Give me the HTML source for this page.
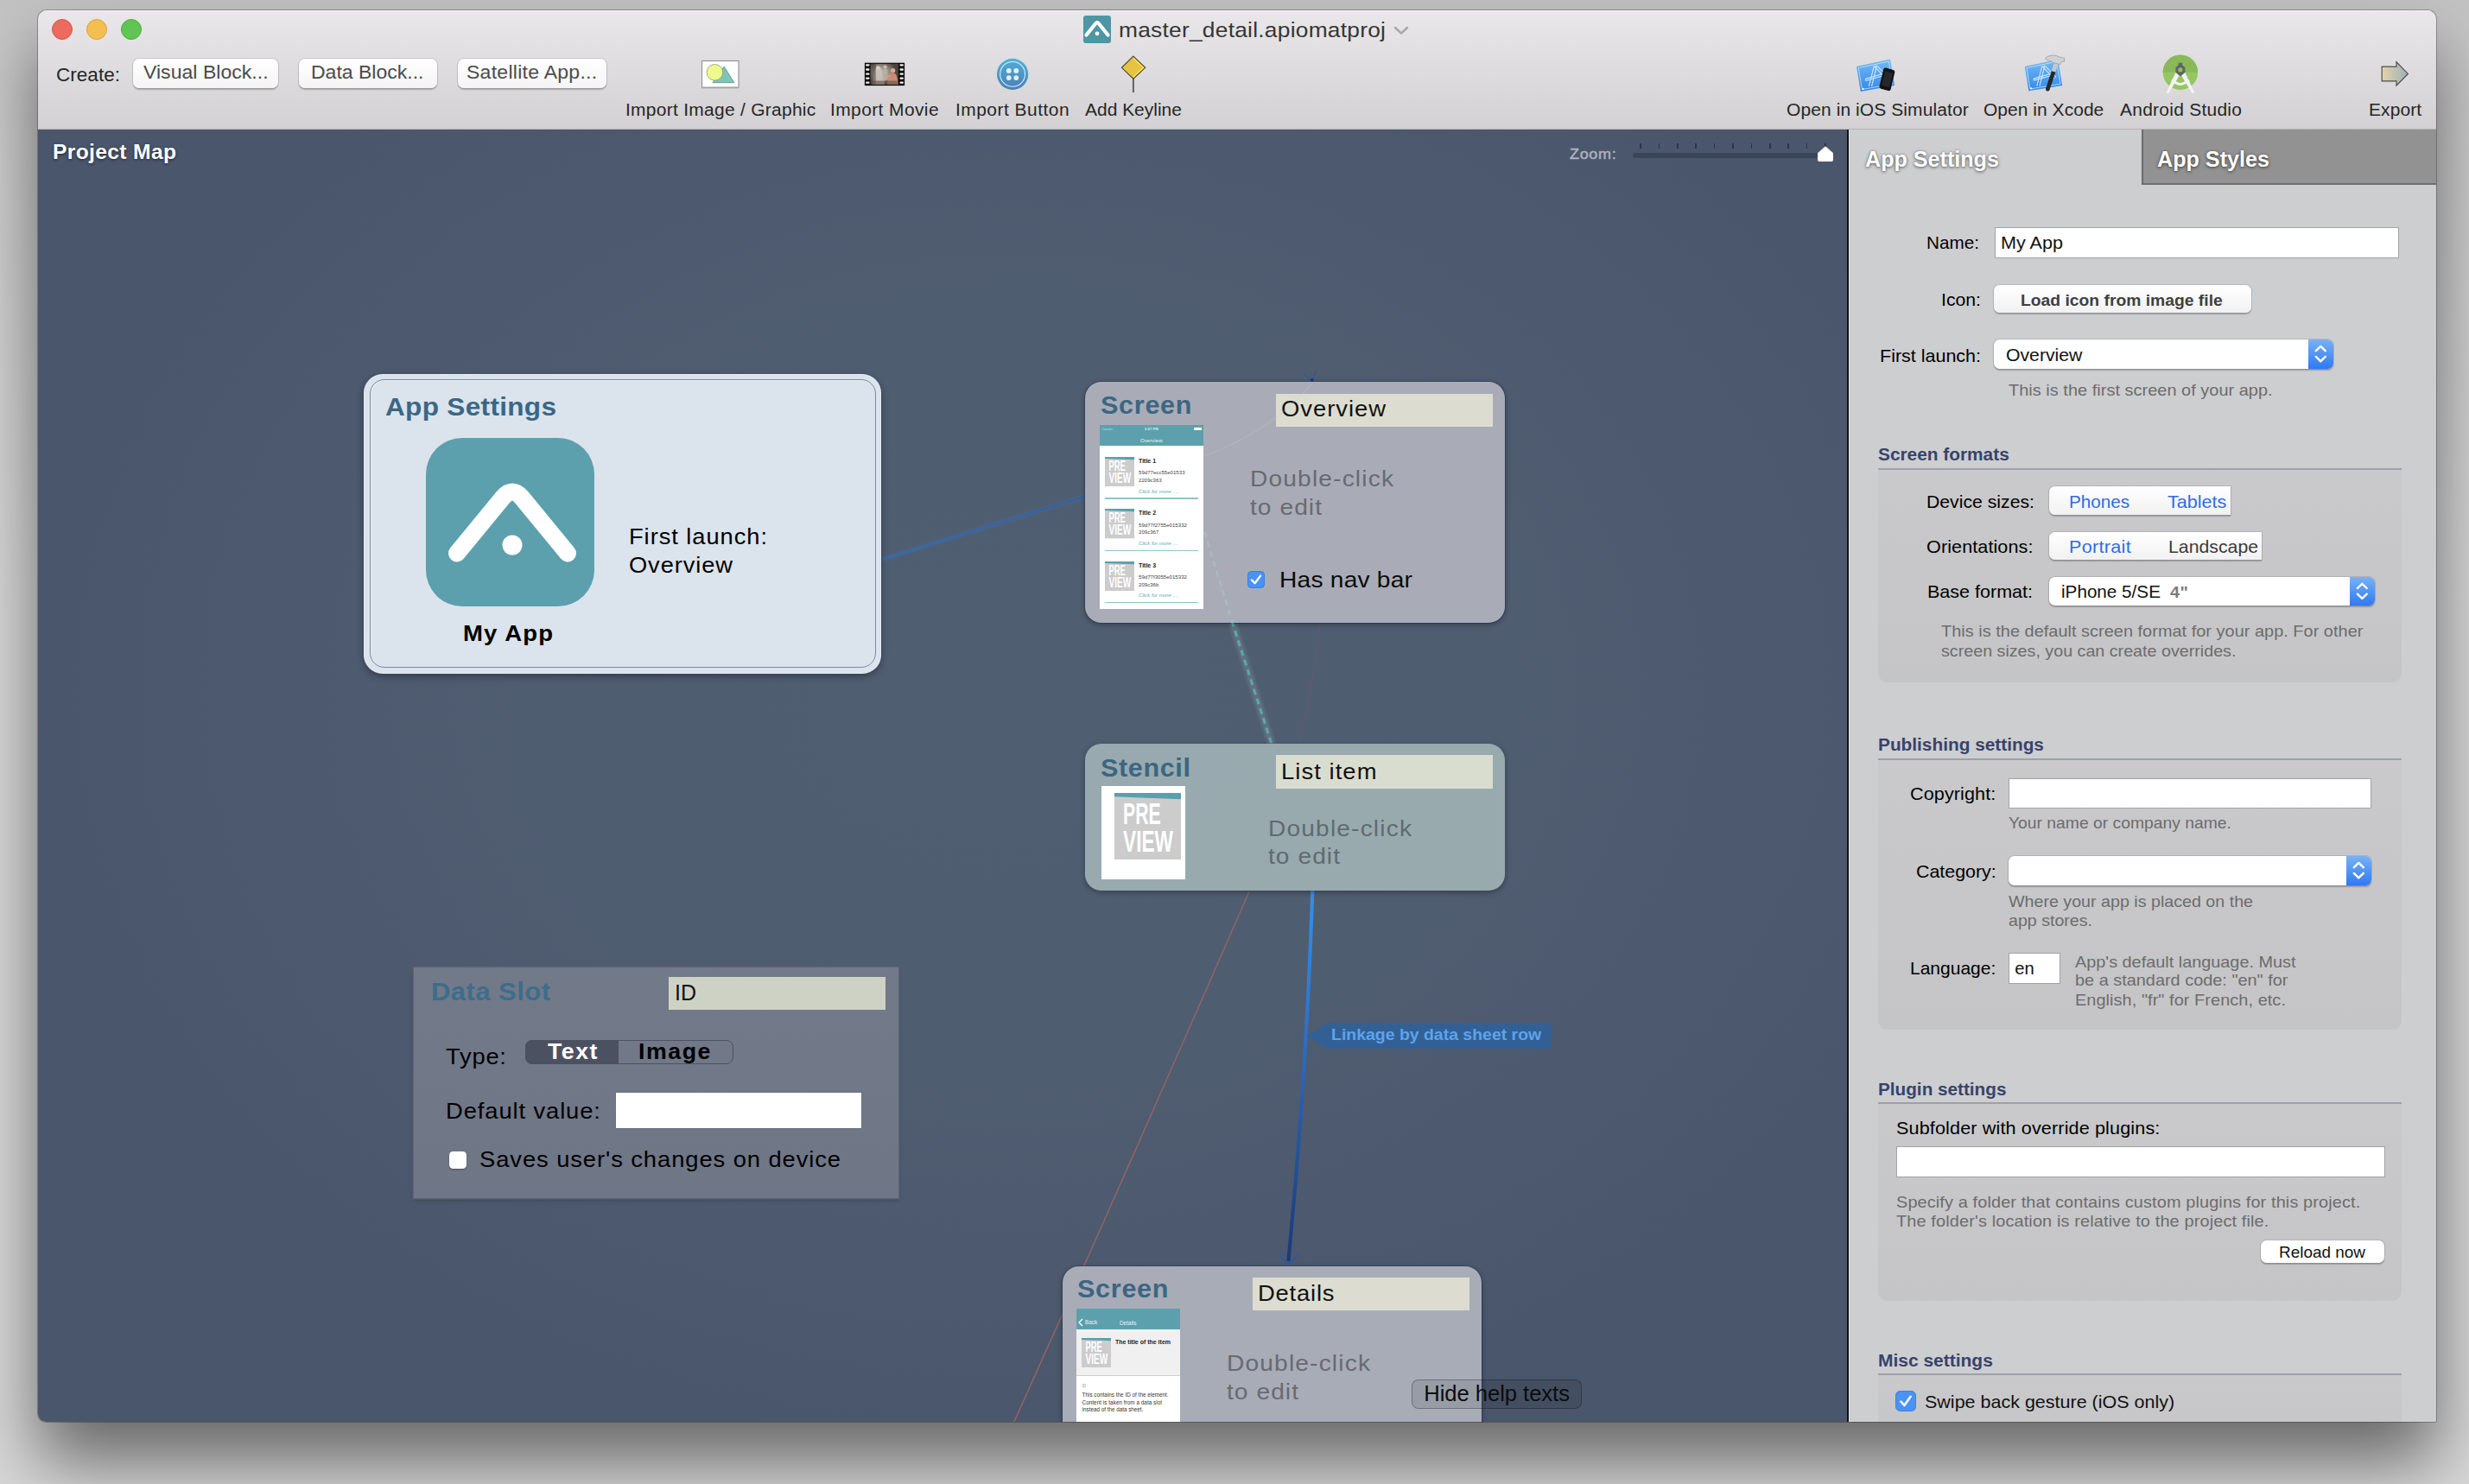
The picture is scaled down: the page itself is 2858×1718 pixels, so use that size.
<!DOCTYPE html>
<html><head><meta charset="utf-8"><title>master_detail.apiomatproj</title>
<style>
html,body{margin:0;padding:0;}
body{width:2858px;height:1718px;overflow:hidden;background:linear-gradient(#c3c3c3 0px,#cccccc 150px,#d8d8d8 700px,#d8d8d8 100%);font-family:"Liberation Sans",sans-serif;position:relative;}
.b{position:absolute;display:block;}
.t{position:absolute;display:block;white-space:pre;transform-origin:0 50%;font-family:"Liberation Sans",sans-serif;}
#shadow{position:absolute;left:44px;top:12px;width:2776px;height:1634px;border-radius:10px 10px 2px 9px;box-shadow:0 0 0 1px rgba(0,0,0,0.26),0 46px 80px rgba(0,0,0,0.52);}
#win{position:absolute;left:0;top:0;width:2858px;height:1718px;clip-path:inset(12px 38px 72px 44px round 10px 10px 2px 9px);}
</style></head><body>
<div id="shadow"></div>
<div id="win">
<div class="b" style="left:44.00px;top:150.00px;width:2094.00px;height:1496.00px;background:#4a566b;"></div>
<div class="b" style="left:44.00px;top:150.00px;width:2094.00px;height:1496.00px;background:radial-gradient(ellipse 1150px 900px at 1131px 650px, rgba(98,118,135,0.26) 0%, rgba(98,118,135,0.21) 50%, rgba(98,118,135,0.0) 100%);"></div>
<span class="t" style="left:60.50px;top:165.00px;font-size:23px;line-height:23px;color:#fff;letter-spacing:0.328px;transform:scaleX(1.0700);font-weight:bold;text-shadow:0 1px 3px rgba(0,0,0,0.6);">Project Map</span>
<span class="t" style="left:1817.00px;top:171.00px;font-size:16.8px;line-height:16.8px;color:#aeb4c0;letter-spacing:0.644px;transform:scaleX(1.0700);-webkit-text-stroke:0.45px #aeb4c0;">Zoom:</span>
<div class="b" style="left:1890.00px;top:177.30px;width:230.00px;height:5.70px;background:#3a4558;border-radius:3px;"></div>
<div class="b" style="left:1898.20px;top:166.00px;width:1.60px;height:5.60px;background:#2b3546;"></div>
<div class="b" style="left:1919.60px;top:166.00px;width:1.60px;height:5.60px;background:#2b3546;"></div>
<div class="b" style="left:1941.00px;top:166.00px;width:1.60px;height:5.60px;background:#2b3546;"></div>
<div class="b" style="left:1962.40px;top:166.00px;width:1.60px;height:5.60px;background:#2b3546;"></div>
<div class="b" style="left:1983.80px;top:166.00px;width:1.60px;height:5.60px;background:#2b3546;"></div>
<div class="b" style="left:2005.20px;top:166.00px;width:1.60px;height:5.60px;background:#2b3546;"></div>
<div class="b" style="left:2026.60px;top:166.00px;width:1.60px;height:5.60px;background:#2b3546;"></div>
<div class="b" style="left:2048.00px;top:166.00px;width:1.60px;height:5.60px;background:#2b3546;"></div>
<div class="b" style="left:2069.40px;top:166.00px;width:1.60px;height:5.60px;background:#2b3546;"></div>
<div class="b" style="left:2090.80px;top:166.00px;width:1.60px;height:5.60px;background:#2b3546;"></div>
<div class="b" style="left:2112.20px;top:166.00px;width:1.60px;height:5.60px;background:#2b3546;"></div>
<svg class="b" style="left:2102px;top:168px" width="22" height="20" viewBox="0 0 22 20"><path d="M11 1.2 L20 9.2 L20 17 Q20 19 18 19 L4 19 Q2 19 2 17 L2 9.2 Z" fill="#fff"/></svg>
<svg class="b" style="left:44px;top:150px" width="2095" height="1496" viewBox="44 150 2095 1496">
<defs>
<linearGradient id="l1" gradientUnits="userSpaceOnUse" x1="1021" y1="648" x2="1257" y2="574"><stop offset="0" stop-color="#2f6fc0"/><stop offset="1" stop-color="#2c5da0"/></linearGradient>
<linearGradient id="l2" gradientUnits="userSpaceOnUse" x1="1519" y1="1031" x2="1491" y2="1463"><stop offset="0" stop-color="#3390ea"/><stop offset="0.3" stop-color="#2e78d0"/><stop offset="0.55" stop-color="#2a5fae"/><stop offset="1" stop-color="#1b3976"/></linearGradient>
</defs>
<path d="M1021 647.6 L1256.7 574.5" stroke="url(#l1)" stroke-width="3" opacity="0.6"/>
<path d="M1021 647.6 L1256.7 574.5" stroke="#3a7fd0" stroke-width="7" opacity="0.12"/>
<path d="M1527.5 721.8 Q1522 790 1503.6 861.3" stroke="#7a5565" stroke-width="1.2" fill="none" opacity="0.5"/>
<path d="M1446 1032 Q1316 1330 1173 1648" stroke="#a3685f" stroke-width="1.5" fill="none" opacity="0.8"/>
<path d="M1426 719 L1476 874" stroke="#cfe9ea" stroke-width="11" fill="none" opacity="0.07"/><path d="M1426 719 L1476 874" stroke="#cfe9ea" stroke-width="6" fill="none" opacity="0.08"/><path d="M1426 719 L1476 874" stroke="#52b4ad" stroke-width="2.9" stroke-dasharray="6.8 5" fill="none" opacity="0.9"/>
<path d="M1519.3 1031 Q1512 1250 1491.4 1460" stroke="url(#l2)" stroke-width="4.2" fill="none"/>
<path d="M1481 1453 L1491.4 1463.5 L1502 1453" stroke="#245aa8" stroke-width="1.6" fill="none"/>
<path d="M1509 433 L1518.5 440.5 L1524 429" stroke="#2a5a9c" stroke-width="1.3" fill="none" opacity="0.8"/>
<rect x="1517" y="438" width="3.5" height="4" fill="#1c3a78"/>
</svg>
<div class="b" style="left:420.80px;top:432.50px;width:599.70px;height:347.50px;border-radius:22px;background:#dbe3ec;box-shadow:0 3px 8px rgba(0,0,0,0.35), inset 0 0 0 1px rgba(255,255,255,0.25);"></div>
<div class="b" style="left:428.00px;top:439.00px;width:585.60px;height:334.00px;border-radius:17px;border:1.9px solid #7a87a7;box-sizing:border-box;box-shadow:inset 1px 1px 0 rgba(255,255,255,0.35);"></div>
<span class="t" style="left:445.50px;top:456.00px;font-size:29.5px;line-height:29.5px;color:#3b6784;letter-spacing:0.285px;transform:scaleX(1.0700);font-weight:bold;">App Settings</span>
<svg class="b" style="left:493px;top:507px" width="195" height="195" viewBox="0 0 195 195"><rect width="195" height="195" rx="42" fill="#5da0ad"/><path d="M36 133.5 L89 69 Q100 56 111 69 L164 133.5" fill="none" stroke="#fff" stroke-width="20" stroke-linecap="round" stroke-linejoin="round"/><circle cx="100" cy="124" r="11.5" fill="#fff"/></svg>
<span class="t" style="left:727.60px;top:609.00px;font-size:25.5px;line-height:25.5px;color:#000;letter-spacing:0.888px;transform:scaleX(1.0700);">First launch:</span>
<span class="t" style="left:727.60px;top:642.00px;font-size:25.5px;line-height:25.5px;color:#000;letter-spacing:0.840px;transform:scaleX(1.0700);">Overview</span>
<span class="t" style="left:536.00px;top:721.00px;font-size:25.7px;line-height:25.7px;color:#000;letter-spacing:1.070px;transform:scaleX(1.0700);font-weight:bold;">My App</span>
<div class="b" style="left:1256.00px;top:442.00px;width:485.80px;height:278.70px;border-radius:19px;box-shadow:0 2px 6px rgba(0,0,0,0.35),0 0 0 1px rgba(50,62,100,0.55);background:rgba(172,175,186,0.965);"></div>
<span class="t" style="left:1273.70px;top:455.00px;font-size:28.6px;line-height:28.6px;color:#3c6682;letter-spacing:0.641px;transform:scaleX(1.0700);font-weight:bold;">Screen</span>
<div class="b" style="left:1476.70px;top:456.00px;width:251.30px;height:38.40px;background:#dcddd0;"></div>
<span class="t" style="left:1483.00px;top:461.00px;font-size:25.6px;line-height:25.6px;color:#111;letter-spacing:0.914px;transform:scaleX(1.0700);">Overview</span>
<span class="t" style="left:1447.00px;top:542.00px;font-size:25.6px;line-height:25.6px;color:#686a72;letter-spacing:1.044px;transform:scaleX(1.1000);">Double-click</span>
<span class="t" style="left:1447.00px;top:575.00px;font-size:25.6px;line-height:25.6px;color:#686a72;letter-spacing:0.953px;transform:scaleX(1.1000);">to edit</span>
<svg class="b" style="left:1444px;top:661px" width="20" height="20" viewBox="0 0 20 20"><rect x="0.5" y="0.5" width="19" height="19" rx="4" fill="#4a92f3" stroke="#3b7fe0"/><path d="M5 10.5 L8.6 14.2 L15 5.6" fill="none" stroke="#fff" stroke-width="2.4" stroke-linecap="round" stroke-linejoin="round"/></svg>
<span class="t" style="left:1481.00px;top:658.00px;font-size:26.3px;line-height:26.3px;color:#0a0a0a;letter-spacing:0.213px;transform:scaleX(1.0700);">Has nav bar</span>
<div class="b" style="left:1272.60px;top:491.70px;width:120.40px;height:213.10px;background:#fff;"></div>
<div class="b" style="left:1272.60px;top:491.70px;width:120.40px;height:23.90px;background:#5da0ad;"></div>
<span class="t" style="left:1319.88px;top:507.00px;font-size:6.2px;line-height:6.2px;color:#e9f4f6;">Overview</span>
<span class="t" style="left:1275.00px;top:495.00px;font-size:4.2px;line-height:4.2px;color:#bfe0e5;">Carrier</span>
<span class="t" style="left:1324.86px;top:495.00px;font-size:4.2px;line-height:4.2px;color:#d8eef2;font-weight:bold;">3:57 PM</span>
<div class="b" style="left:1381.50px;top:494.50px;width:9.00px;height:3.00px;background:#fff;border-radius:1px;"></div>
<svg class="b" style="left:1278.70px;top:529.00px" width="34.30" height="34.30" viewBox="0 0 100 100"><rect width="100" height="100" fill="#cccccc"/><path d="M0 0 L100 0 L100 9.5 L0 5.5 Z" fill="#5a9fab"/><g fill="#fff" font-family="Liberation Sans, sans-serif" font-weight="bold"><text x="13" y="47" font-size="46.6" textLength="56.7" lengthAdjust="spacingAndGlyphs">PRE</text><text x="13" y="87.8" font-size="46.6" textLength="75" lengthAdjust="spacingAndGlyphs">VIEW</text></g></svg>
<span class="t" style="left:1318.00px;top:530.00px;font-size:7px;line-height:7px;color:#222;font-weight:bold;">Title 1</span>
<span class="t" style="left:1318.00px;top:544.00px;font-size:6.1px;line-height:6.1px;color:#444;">59d77ecc55e01533</span>
<span class="t" style="left:1318.00px;top:553.00px;font-size:6.1px;line-height:6.1px;color:#444;">2209c363</span>
<span class="t" style="left:1318.00px;top:566.00px;font-size:6.1px;line-height:6.1px;color:#62aab5;font-style:italic;">Click for more ....</span>
<div class="b" style="left:1278.70px;top:576.30px;width:108.30px;height:1.30px;background:#8fc4cc;"></div>
<svg class="b" style="left:1278.70px;top:589.30px" width="34.30" height="34.30" viewBox="0 0 100 100"><rect width="100" height="100" fill="#cccccc"/><path d="M0 0 L100 0 L100 9.5 L0 5.5 Z" fill="#5a9fab"/><g fill="#fff" font-family="Liberation Sans, sans-serif" font-weight="bold"><text x="13" y="47" font-size="46.6" textLength="56.7" lengthAdjust="spacingAndGlyphs">PRE</text><text x="13" y="87.8" font-size="46.6" textLength="75" lengthAdjust="spacingAndGlyphs">VIEW</text></g></svg>
<span class="t" style="left:1318.00px;top:590.00px;font-size:7px;line-height:7px;color:#222;font-weight:bold;">Title 2</span>
<span class="t" style="left:1318.00px;top:605.00px;font-size:6.1px;line-height:6.1px;color:#444;">59d77f2755e015332</span>
<span class="t" style="left:1318.00px;top:613.00px;font-size:6.1px;line-height:6.1px;color:#444;">209c367</span>
<span class="t" style="left:1318.00px;top:626.00px;font-size:6.1px;line-height:6.1px;color:#62aab5;font-style:italic;">Click for more ....</span>
<div class="b" style="left:1278.70px;top:636.60px;width:108.30px;height:1.30px;background:#8fc4cc;"></div>
<svg class="b" style="left:1278.70px;top:649.60px" width="34.30" height="34.30" viewBox="0 0 100 100"><rect width="100" height="100" fill="#cccccc"/><path d="M0 0 L100 0 L100 9.5 L0 5.5 Z" fill="#5a9fab"/><g fill="#fff" font-family="Liberation Sans, sans-serif" font-weight="bold"><text x="13" y="47" font-size="46.6" textLength="56.7" lengthAdjust="spacingAndGlyphs">PRE</text><text x="13" y="87.8" font-size="46.6" textLength="75" lengthAdjust="spacingAndGlyphs">VIEW</text></g></svg>
<span class="t" style="left:1318.00px;top:651.00px;font-size:7px;line-height:7px;color:#222;font-weight:bold;">Title 3</span>
<span class="t" style="left:1318.00px;top:665.00px;font-size:6.1px;line-height:6.1px;color:#444;">59d77f3055e015332</span>
<span class="t" style="left:1318.00px;top:674.00px;font-size:6.1px;line-height:6.1px;color:#444;">209c36b</span>
<span class="t" style="left:1318.00px;top:686.00px;font-size:6.1px;line-height:6.1px;color:#62aab5;font-style:italic;">Click for more ....</span>
<div class="b" style="left:1278.70px;top:696.90px;width:108.30px;height:1.30px;background:#8fc4cc;"></div>
<svg class="b" style="left:1380px;top:600px" width="70" height="130" viewBox="1380 600 70 130"><path d="M1394.2 615.6 L1427 722" stroke="#9fd6d2" stroke-width="2.9" stroke-dasharray="6.8 5" fill="none" opacity="0.35"/></svg>
<svg class="b" style="left:1390px;top:440px" width="135" height="95" viewBox="1390 440 135 95"><path d="M1394 528 Q1470 500 1519 444" stroke="#c8ccdc" stroke-width="1.6" fill="none" opacity="0.22"/></svg>
<div class="b" style="left:1256.00px;top:860.80px;width:485.80px;height:170.60px;border-radius:19px;box-shadow:0 2px 6px rgba(0,0,0,0.35),0 0 0 1px rgba(90,110,130,0.35);background:rgba(155,172,177,0.97);"></div>
<span class="t" style="left:1273.70px;top:875.00px;font-size:28.6px;line-height:28.6px;color:#3c6682;letter-spacing:0.570px;transform:scaleX(1.0700);font-weight:bold;">Stencil</span>
<div class="b" style="left:1476.70px;top:873.90px;width:251.30px;height:38.90px;background:#d9ddd0;"></div>
<span class="t" style="left:1483.00px;top:881.00px;font-size:25.6px;line-height:25.6px;color:#111;letter-spacing:0.995px;transform:scaleX(1.0700);">List item</span>
<div class="b" style="left:1275.30px;top:910.00px;width:96.40px;height:108.30px;background:#fff;"></div>
<svg class="b" style="left:1289.50px;top:917.60px" width="77.20" height="77.20" viewBox="0 0 100 100"><rect width="100" height="100" fill="#cccccc"/><path d="M0 0 L100 0 L100 9.5 L0 5.5 Z" fill="#5a9fab"/><g fill="#fff" font-family="Liberation Sans, sans-serif" font-weight="bold"><text x="13" y="47" font-size="46.6" textLength="56.7" lengthAdjust="spacingAndGlyphs">PRE</text><text x="13" y="87.8" font-size="46.6" textLength="75" lengthAdjust="spacingAndGlyphs">VIEW</text></g></svg>
<span class="t" style="left:1468.40px;top:947.00px;font-size:25.6px;line-height:25.6px;color:#5f6b70;letter-spacing:1.044px;transform:scaleX(1.1000);">Double-click</span>
<span class="t" style="left:1468.40px;top:979.00px;font-size:25.6px;line-height:25.6px;color:#5f6b70;letter-spacing:0.953px;transform:scaleX(1.1000);">to edit</span>
<div class="b" style="left:479.40px;top:1120.00px;width:560.90px;height:266.80px;background:linear-gradient(#727988,#6f7686);box-shadow:0 0 0 1.5px #5b627a, 0 2px 5px rgba(0,0,0,0.25);"></div>
<span class="t" style="left:498.90px;top:1134.00px;font-size:29px;line-height:29px;color:#3c6d8c;letter-spacing:0.411px;transform:scaleX(1.0700);font-weight:bold;">Data Slot</span>
<div class="b" style="left:774.00px;top:1130.90px;width:251.20px;height:38.40px;background:#ced2c5;"></div>
<span class="t" style="left:781.30px;top:1137.00px;font-size:25.6px;line-height:25.6px;color:#111;transform:scaleX(0.9766);">ID</span>
<span class="t" style="left:516.40px;top:1211.00px;font-size:25.6px;line-height:25.6px;color:#000;letter-spacing:0.702px;transform:scaleX(1.0700);">Type:</span>
<div class="b" style="left:607.80px;top:1204.00px;width:241.00px;height:27.70px;border-radius:8px;border:1.5px solid #4c5163;box-sizing:border-box;"></div>
<div class="b" style="left:607.80px;top:1204.00px;width:108.70px;height:27.70px;border-radius:8px 0 0 8px;background:#4c5161;"></div>
<span class="t" style="left:633.55px;top:1205.00px;font-size:25px;line-height:25px;color:#fff;letter-spacing:1.396px;transform:scaleX(1.0700);font-weight:bold;">Text</span>
<span class="t" style="left:739.00px;top:1205.00px;font-size:25px;line-height:25px;color:#000;letter-spacing:1.446px;transform:scaleX(1.0700);font-weight:bold;">Image</span>
<span class="t" style="left:516.40px;top:1274.00px;font-size:25.6px;line-height:25.6px;color:#000;letter-spacing:0.827px;transform:scaleX(1.0700);">Default value:</span>
<div class="b" style="left:712.70px;top:1264.80px;width:284.80px;height:41.20px;background:#fff;box-shadow:0 0 0 1px #6b7286;"></div>
<div class="b" style="left:520.30px;top:1333.30px;width:19.40px;height:19.40px;background:#fff;border-radius:4.5px;box-shadow:0 1px 2px rgba(0,0,0,0.35);"></div>
<span class="t" style="left:555.30px;top:1330.00px;font-size:25.6px;line-height:25.6px;color:#000;letter-spacing:0.844px;transform:scaleX(1.0700);">Saves user's changes on device</span>
<svg class="b" style="left:1510px;top:1182px" width="290" height="34" viewBox="1510 1182 290 34"><path d="M1512.2 1199.2 L1536.4 1184.3 L1792.5 1184.3 Q1796.2 1184.3 1796.2 1188 L1796.2 1210.3 Q1796.2 1214 1792.5 1214 L1536.4 1214 Z" fill="#336094"/></svg>
<span class="t" style="left:1541.40px;top:1189.00px;font-size:18.7px;line-height:18.7px;color:#5ba4ee;transform:scaleX(1.0406);font-weight:bold;">Linkage by data sheet row</span>
<div class="b" style="left:1229.50px;top:1465.50px;width:485.40px;height:234.50px;border-radius:19px;box-shadow:0 2px 6px rgba(0,0,0,0.35),0 0 0 1px rgba(50,62,100,0.55);background:rgba(172,175,186,0.965);"></div>
<span class="t" style="left:1246.50px;top:1478.00px;font-size:28.6px;line-height:28.6px;color:#3c6682;letter-spacing:0.641px;transform:scaleX(1.0700);font-weight:bold;">Screen</span>
<div class="b" style="left:1449.80px;top:1479.00px;width:251.50px;height:38.00px;background:#dcddd0;"></div>
<span class="t" style="left:1456.30px;top:1485.00px;font-size:25.6px;line-height:25.6px;color:#111;letter-spacing:0.743px;transform:scaleX(1.0700);">Details</span>
<span class="t" style="left:1420.30px;top:1566.00px;font-size:25.6px;line-height:25.6px;color:#686a72;letter-spacing:1.044px;transform:scaleX(1.1000);">Double-click</span>
<span class="t" style="left:1420.30px;top:1599.00px;font-size:25.6px;line-height:25.6px;color:#686a72;letter-spacing:0.953px;transform:scaleX(1.1000);">to edit</span>
<div class="b" style="left:1245.60px;top:1515.00px;width:120.20px;height:135.00px;background:#fff;"></div>
<div class="b" style="left:1245.60px;top:1515.00px;width:120.20px;height:23.70px;background:#5da0ad;"></div>
<div class="b" style="left:1245.60px;top:1538.70px;width:120.20px;height:54.30px;background:#f0f0f0;border-bottom:1px solid #cfcfcf;box-sizing:border-box;"></div>
<svg class="b" style="left:1247px;top:1526px" width="8" height="10" viewBox="0 0 8 10"><path d="M6 1 L2 5 L6 9" fill="none" stroke="#fff" stroke-width="1.3"/></svg>
<span class="t" style="left:1256.00px;top:1528.00px;font-size:6.4px;line-height:6.4px;color:#e9f4f6;">Back</span>
<span class="t" style="left:1295.92px;top:1529.00px;font-size:6.4px;line-height:6.4px;color:#e9f4f6;">Details</span>
<svg class="b" style="left:1251.80px;top:1548.50px" width="34.30" height="34.30" viewBox="0 0 100 100"><rect width="100" height="100" fill="#cccccc"/><path d="M0 0 L100 0 L100 9.5 L0 5.5 Z" fill="#5a9fab"/><g fill="#fff" font-family="Liberation Sans, sans-serif" font-weight="bold"><text x="13" y="47" font-size="46.6" textLength="56.7" lengthAdjust="spacingAndGlyphs">PRE</text><text x="13" y="87.8" font-size="46.6" textLength="75" lengthAdjust="spacingAndGlyphs">VIEW</text></g></svg>
<span class="t" style="left:1291.00px;top:1551.00px;font-size:6.8px;line-height:6.8px;color:#222;transform:scaleX(1.0267);font-weight:bold;">The title of the item</span>
<span class="t" style="left:1252.60px;top:1603.00px;font-size:4.6px;line-height:4.6px;color:#999;">ID</span>
<span class="t" style="left:1252.60px;top:1612.00px;font-size:6.3px;line-height:6.3px;color:#333;letter-spacing:0.026px;">This contains the ID of the element.</span>
<span class="t" style="left:1252.60px;top:1621.00px;font-size:6.3px;line-height:6.3px;color:#333;letter-spacing:0.056px;">Content is taken from a data slot</span>
<span class="t" style="left:1252.60px;top:1629.00px;font-size:6.3px;line-height:6.3px;color:#333;">instead of the data sheet.</span>
<div class="b" style="left:1634.00px;top:1596.50px;width:197.40px;height:34.90px;border-radius:8px;border:1.7px solid rgba(0,0,0,0.28);box-sizing:border-box;background:rgba(0,0,0,0.09);"></div>
<span class="t" style="left:1648.20px;top:1601.00px;font-size:25.6px;line-height:25.6px;color:#0c0c0c;letter-spacing:-0.038px;">Hide help texts</span>
<div class="b" style="left:2138.00px;top:150.00px;width:2.00px;height:1496.00px;background:#131313;"></div>
<div class="b" style="left:2140.00px;top:150.00px;width:1.20px;height:1496.00px;background:#e3e3e5;"></div>
<div class="b" style="left:2141.00px;top:150.00px;width:679.00px;height:1496.00px;background:#cdced0;"></div>
<div class="b" style="left:2479.20px;top:150.00px;width:340.80px;height:63.90px;background:#929292;border-left:2px solid #6b6b6b;border-bottom:2px solid #6f6f6f;box-sizing:border-box;"></div>
<span class="t" style="left:2158.60px;top:171.00px;font-size:26.4px;line-height:26.4px;color:#fff;transform:scaleX(0.9521);font-weight:bold;text-shadow:0 1px 4px rgba(0,0,0,0.55),0 0 2px rgba(0,0,0,0.3);">App Settings</span>
<span class="t" style="left:2497.20px;top:171.00px;font-size:26.4px;line-height:26.4px;color:#fff;transform:scaleX(0.9528);font-weight:bold;text-shadow:0 1px 4px rgba(0,0,0,0.55),0 0 2px rgba(0,0,0,0.3);">App Styles</span>
<span class="t" style="left:2229.80px;top:271.00px;font-size:20.2px;line-height:20.2px;color:#000;transform:scaleX(1.0253);">Name:</span>
<div class="b" style="left:2309.00px;top:263.00px;width:467.90px;height:35.70px;background:#fff;border:1px solid #a3a3a3;box-sizing:border-box;"></div>
<span class="t" style="left:2316.40px;top:271.00px;font-size:20.2px;line-height:20.2px;color:#111;transform:scaleX(1.0688);">My App</span>
<span class="t" style="left:2246.80px;top:337.00px;font-size:20.2px;line-height:20.2px;color:#000;transform:scaleX(1.0504);">Icon:</span>
<div class="b" style="left:2307.80px;top:330.00px;width:298.60px;height:32.40px;border-radius:6.5px;background:linear-gradient(#ffffff,#f1f1f1);box-shadow:0 0 0 1px rgba(0,0,0,0.09),0 1.5px 1.5px rgba(0,0,0,0.22);"></div>
<span class="t" style="left:2339.40px;top:339.00px;font-size:18.3px;line-height:18.3px;color:#404040;transform:scaleX(1.0556);font-weight:bold;">Load icon from image file</span>
<span class="t" style="left:2175.70px;top:402.00px;font-size:20.2px;line-height:20.2px;color:#000;transform:scaleX(1.0644);">First launch:</span>
<div class="b" style="left:2307.80px;top:393.20px;width:393.00px;height:33.60px;border-radius:6.5px;background:#fff;box-shadow:0 0 0 1px rgba(0,0,0,0.10),0 1.5px 1.5px rgba(0,0,0,0.22);overflow:hidden;"><div class="b" style="left:364.40px;top:0;width:28.60px;height:33.60px;background:linear-gradient(#78b2f6,#2f79f2);"></div><svg class="b" style="left:364.40px;top:0" width="28.60" height="33.60" viewBox="0 0 28 33"><path d="M8.6 13 L14 7.8 L19.4 13 M8.6 19.6 L14 24.8 L19.4 19.6" fill="none" stroke="#fff" stroke-width="2.4" stroke-linecap="round" stroke-linejoin="round"/></svg></div>
<span class="t" style="left:2322.30px;top:401.00px;font-size:20.2px;line-height:20.2px;color:#111;transform:scaleX(1.0513);">Overview</span>
<span class="t" style="left:2324.70px;top:443.00px;font-size:18.6px;line-height:18.6px;color:#6c6c6c;letter-spacing:0.039px;transform:scaleX(1.0700);">This is the first screen of your app.</span>
<span class="t" style="left:2174.30px;top:517.00px;font-size:19.6px;line-height:19.6px;color:#38436b;transform:scaleX(1.0637);font-weight:bold;">Screen formats</span>
<div class="b" style="left:2174.20px;top:543.40px;width:605.80px;height:246.20px;background:linear-gradient(#c9c9cb,#c5c5c7);border-radius:0 0 11px 11px;"></div>
<div class="b" style="left:2174.20px;top:542.20px;width:605.80px;height:2.20px;background:#9da0ad;"></div>
<span class="t" style="left:2229.70px;top:571.00px;font-size:20.2px;line-height:20.2px;color:#000;transform:scaleX(1.0505);">Device sizes:</span>
<div class="b" style="left:2371.80px;top:563.40px;width:210.20px;height:32.70px;border-radius:6.5px 0 0 6.5px;background:linear-gradient(#ffffff,#f1f1f1);box-shadow:0 0 0 1px rgba(0,0,0,0.09),0 1.5px 1.5px rgba(0,0,0,0.22);"></div>
<span class="t" style="left:2394.50px;top:571.00px;font-size:20.2px;line-height:20.2px;color:#2f6ce8;transform:scaleX(1.0247);">Phones</span>
<span class="t" style="left:2508.90px;top:571.00px;font-size:20.2px;line-height:20.2px;color:#2f6ce8;transform:scaleX(1.0687);">Tablets</span>
<span class="t" style="left:2229.70px;top:623.00px;font-size:20.2px;line-height:20.2px;color:#000;letter-spacing:0.075px;transform:scaleX(1.0700);">Orientations:</span>
<div class="b" style="left:2371.80px;top:615.60px;width:246.20px;height:32.70px;border-radius:6.5px 0 0 6.5px;background:linear-gradient(#ffffff,#f1f1f1);box-shadow:0 0 0 1px rgba(0,0,0,0.09),0 1.5px 1.5px rgba(0,0,0,0.22);"></div>
<span class="t" style="left:2394.50px;top:623.00px;font-size:20.2px;line-height:20.2px;color:#2f6ce8;letter-spacing:0.272px;transform:scaleX(1.0700);">Portrait</span>
<span class="t" style="left:2510.40px;top:623.00px;font-size:20.2px;line-height:20.2px;color:#3a3a3a;transform:scaleX(1.0532);">Landscape</span>
<span class="t" style="left:2231.10px;top:675.00px;font-size:20.2px;line-height:20.2px;color:#000;transform:scaleX(1.0663);">Base format:</span>
<div class="b" style="left:2371.80px;top:667.50px;width:376.80px;height:33.00px;border-radius:6.5px;background:#fff;box-shadow:0 0 0 1px rgba(0,0,0,0.10),0 1.5px 1.5px rgba(0,0,0,0.22);overflow:hidden;"><div class="b" style="left:348.20px;top:0;width:28.60px;height:33.00px;background:linear-gradient(#78b2f6,#2f79f2);"></div><svg class="b" style="left:348.20px;top:0" width="28.60" height="33.00" viewBox="0 0 28 33"><path d="M8.6 13 L14 7.8 L19.4 13 M8.6 19.6 L14 24.8 L19.4 19.6" fill="none" stroke="#fff" stroke-width="2.4" stroke-linecap="round" stroke-linejoin="round"/></svg></div>
<span class="t" style="left:2386.00px;top:675.00px;font-size:20.2px;line-height:20.2px;color:#111;transform:scaleX(1.0240);">iPhone 5/SE</span>
<span class="t" style="left:2512.40px;top:677.00px;font-size:18.5px;line-height:18.5px;color:#7a7a7a;letter-spacing:0.566px;transform:scaleX(1.0700);font-weight:bold;">4"</span>
<span class="t" style="left:2246.50px;top:722.00px;font-size:18.6px;line-height:18.6px;color:#6c6c6c;letter-spacing:0.030px;transform:scaleX(1.0700);">This is the default screen format for your app. For other</span>
<span class="t" style="left:2246.50px;top:745.00px;font-size:18.6px;line-height:18.6px;color:#6c6c6c;transform:scaleX(1.0588);">screen sizes, you can create overrides.</span>
<span class="t" style="left:2174.30px;top:853.00px;font-size:19.6px;line-height:19.6px;color:#38436b;transform:scaleX(1.0622);font-weight:bold;">Publishing settings</span>
<div class="b" style="left:2174.20px;top:878.80px;width:605.80px;height:313.00px;background:linear-gradient(#c9c9cb,#c5c5c7);border-radius:0 0 11px 11px;"></div>
<div class="b" style="left:2174.20px;top:877.60px;width:605.80px;height:2.20px;background:#9da0ad;"></div>
<span class="t" style="left:2211.40px;top:909.00px;font-size:20.2px;line-height:20.2px;color:#000;letter-spacing:0.082px;transform:scaleX(1.0700);">Copyright:</span>
<div class="b" style="left:2324.90px;top:901.00px;width:419.90px;height:35.40px;background:#fff;border:1px solid #a3a3a3;box-sizing:border-box;"></div>
<span class="t" style="left:2324.60px;top:944.00px;font-size:18.6px;line-height:18.6px;color:#6c6c6c;transform:scaleX(1.0383);">Your name or company name.</span>
<span class="t" style="left:2217.90px;top:999.00px;font-size:20.2px;line-height:20.2px;color:#000;transform:scaleX(1.0596);">Category:</span>
<div class="b" style="left:2324.90px;top:991.30px;width:419.90px;height:33.60px;border-radius:6.5px;background:#fff;box-shadow:0 0 0 1px rgba(0,0,0,0.10),0 1.5px 1.5px rgba(0,0,0,0.22);overflow:hidden;"><div class="b" style="left:391.30px;top:0;width:28.60px;height:33.60px;background:linear-gradient(#78b2f6,#2f79f2);"></div><svg class="b" style="left:391.30px;top:0" width="28.60" height="33.60" viewBox="0 0 28 33"><path d="M8.6 13 L14 7.8 L19.4 13 M8.6 19.6 L14 24.8 L19.4 19.6" fill="none" stroke="#fff" stroke-width="2.4" stroke-linecap="round" stroke-linejoin="round"/></svg></div>
<span class="t" style="left:2324.60px;top:1035.00px;font-size:18.6px;line-height:18.6px;color:#6c6c6c;transform:scaleX(1.0572);">Where your app is placed on the</span>
<span class="t" style="left:2324.60px;top:1057.00px;font-size:18.6px;line-height:18.6px;color:#6c6c6c;transform:scaleX(1.0541);">app stores.</span>
<span class="t" style="left:2211.40px;top:1111.00px;font-size:20.2px;line-height:20.2px;color:#000;transform:scaleX(1.0399);">Language:</span>
<div class="b" style="left:2324.90px;top:1103.30px;width:59.90px;height:35.40px;background:#fff;border:1px solid #a3a3a3;box-sizing:border-box;"></div>
<span class="t" style="left:2332.30px;top:1111.00px;font-size:20.2px;line-height:20.2px;color:#111;letter-spacing:0.031px;">en</span>
<span class="t" style="left:2402.20px;top:1105.00px;font-size:18.6px;line-height:18.6px;color:#6c6c6c;transform:scaleX(1.0681);">App's default language. Must</span>
<span class="t" style="left:2402.20px;top:1126.00px;font-size:18.6px;line-height:18.6px;color:#6c6c6c;transform:scaleX(1.0700);">be a standard code: "en" for</span>
<span class="t" style="left:2402.20px;top:1149.00px;font-size:18.6px;line-height:18.6px;color:#6c6c6c;letter-spacing:0.065px;transform:scaleX(1.0700);">English, "fr" for French, etc.</span>
<span class="t" style="left:2174.30px;top:1252.00px;font-size:19.6px;line-height:19.6px;color:#38436b;transform:scaleX(1.0571);font-weight:bold;">Plugin settings</span>
<div class="b" style="left:2174.20px;top:1277.00px;width:605.80px;height:229.00px;background:linear-gradient(#c9c9cb,#c5c5c7);border-radius:0 0 11px 11px;"></div>
<div class="b" style="left:2174.20px;top:1275.80px;width:605.80px;height:2.20px;background:#9da0ad;"></div>
<span class="t" style="left:2194.50px;top:1296.00px;font-size:20.2px;line-height:20.2px;color:#000;letter-spacing:0.119px;transform:scaleX(1.0700);">Subfolder with override plugins:</span>
<div class="b" style="left:2195.10px;top:1327.40px;width:566.00px;height:35.30px;background:#fff;border:1px solid #a3a3a3;box-sizing:border-box;"></div>
<span class="t" style="left:2194.50px;top:1383.00px;font-size:18.6px;line-height:18.6px;color:#6c6c6c;letter-spacing:0.113px;transform:scaleX(1.0700);">Specify a folder that contains custom plugins for this project.</span>
<span class="t" style="left:2194.50px;top:1405.00px;font-size:18.6px;line-height:18.6px;color:#6c6c6c;letter-spacing:0.129px;transform:scaleX(1.0700);">The folder's location is relative to the project file.</span>
<div class="b" style="left:2617.40px;top:1435.70px;width:143.00px;height:26.50px;border-radius:6.5px;background:#fff;box-shadow:0 0 0 1px rgba(0,0,0,0.09),0 1.5px 1.5px rgba(0,0,0,0.22);"></div>
<span class="t" style="left:2637.60px;top:1441.00px;font-size:18.4px;line-height:18.4px;color:#111;transform:scaleX(1.0291);">Reload now</span>
<span class="t" style="left:2174.30px;top:1566.00px;font-size:19.6px;line-height:19.6px;color:#38436b;transform:scaleX(1.0700);font-weight:bold;">Misc settings</span>
<div class="b" style="left:2174.20px;top:1591.00px;width:605.80px;height:109.00px;background:linear-gradient(#c9c9cb,#c5c5c7);border-radius:0 0 11px 11px;"></div>
<div class="b" style="left:2174.20px;top:1589.80px;width:605.80px;height:2.20px;background:#9da0ad;"></div>
<svg class="b" style="left:2194px;top:1610px" width="24" height="24" viewBox="0 0 24 24"><rect x="0.5" y="0.5" width="23" height="23" rx="5" fill="#4a92f3" stroke="#3b7fe0"/><path d="M6.4 12.6 L10.4 17 L17.6 6.8" fill="none" stroke="#fff" stroke-width="2.6" stroke-linecap="round" stroke-linejoin="round"/></svg>
<span class="t" style="left:2228.40px;top:1613.00px;font-size:20.2px;line-height:20.2px;color:#111;transform:scaleX(1.0648);">Swipe back gesture (iOS only)</span>
<div class="b" style="left:44.00px;top:12.00px;width:2776.00px;height:138.00px;background:linear-gradient(#e9e7e9,#d3d1d3);border-bottom:1px solid #b4b2b4;box-sizing:border-box;box-shadow:inset 0 1px 0 #f6f6f6;"></div>
<div class="b" style="left:60.00px;top:22.00px;width:24.00px;height:24.00px;border-radius:50%;background:#ed6a5e;border:1px solid #d5544a;box-sizing:border-box;"></div>
<div class="b" style="left:100.00px;top:22.00px;width:24.00px;height:24.00px;border-radius:50%;background:#f5bf4f;border:1px solid #d9a33c;box-sizing:border-box;"></div>
<div class="b" style="left:140.00px;top:22.00px;width:24.00px;height:24.00px;border-radius:50%;background:#61c554;border:1px solid #4fa843;box-sizing:border-box;"></div>
<svg class="b" style="left:1254px;top:18px" width="32" height="32" viewBox="0 0 32 32"><rect width="32" height="32" rx="3" fill="#4e96a4"/><path d="M3.5 22.5 L14.2 9.2 Q16 7.2 17.8 9.2 L28.5 22.5" fill="none" stroke="#fff" stroke-width="4.2" stroke-linecap="round" stroke-linejoin="round"/><circle cx="16" cy="20.8" r="2.4" fill="#fff"/></svg>
<span class="t" style="left:1295.30px;top:23.00px;font-size:24.6px;line-height:24.6px;color:#353535;letter-spacing:0.239px;transform:scaleX(1.0700);">master_detail.apiomatproj</span>
<svg class="b" style="left:1612px;top:28px" width="20" height="14" viewBox="0 0 20 14"><path d="M3 4 L10 10.5 L17 4" fill="none" stroke="#a9a7a9" stroke-width="2.4" stroke-linecap="round" stroke-linejoin="round"/></svg>
<span class="t" style="left:65.00px;top:76.00px;font-size:22.5px;line-height:22.5px;color:#262626;letter-spacing:0.036px;">Create:</span>
<div class="b" style="left:154.00px;top:68.00px;width:168.00px;height:34.00px;border-radius:7px;background:linear-gradient(#ffffff,#f4f4f4);box-shadow:0 0 0 1px rgba(0,0,0,0.10),0 1.5px 1.5px rgba(0,0,0,0.22);"></div>
<span class="t" style="left:165.60px;top:74.00px;font-size:21.5px;line-height:21.5px;color:#4b4b4b;letter-spacing:0.036px;transform:scaleX(1.0700);">Visual Block...</span>
<div class="b" style="left:346.00px;top:68.00px;width:160.00px;height:34.00px;border-radius:7px;background:linear-gradient(#ffffff,#f4f4f4);box-shadow:0 0 0 1px rgba(0,0,0,0.10),0 1.5px 1.5px rgba(0,0,0,0.22);"></div>
<span class="t" style="left:360.40px;top:74.00px;font-size:21.5px;line-height:21.5px;color:#4b4b4b;transform:scaleX(1.0700);">Data Block...</span>
<div class="b" style="left:530.00px;top:68.00px;width:172.00px;height:34.00px;border-radius:7px;background:linear-gradient(#ffffff,#f4f4f4);box-shadow:0 0 0 1px rgba(0,0,0,0.10),0 1.5px 1.5px rgba(0,0,0,0.22);"></div>
<span class="t" style="left:539.80px;top:74.00px;font-size:21.5px;line-height:21.5px;color:#4b4b4b;letter-spacing:0.251px;transform:scaleX(1.0700);">Satellite App...</span>
<span class="t" style="left:724.10px;top:118.00px;font-size:19.6px;line-height:19.6px;color:#262626;letter-spacing:0.260px;transform:scaleX(1.0700);">Import Image / Graphic</span>
<span class="t" style="left:961.40px;top:118.00px;font-size:19.6px;line-height:19.6px;color:#262626;letter-spacing:0.373px;transform:scaleX(1.0700);">Import Movie</span>
<span class="t" style="left:1106.00px;top:118.00px;font-size:19.6px;line-height:19.6px;color:#262626;letter-spacing:0.444px;transform:scaleX(1.0700);">Import Button</span>
<span class="t" style="left:1255.70px;top:118.00px;font-size:19.6px;line-height:19.6px;color:#262626;transform:scaleX(1.0700);">Add Keyline</span>
<span class="t" style="left:2067.50px;top:118.00px;font-size:19.6px;line-height:19.6px;color:#262626;letter-spacing:0.096px;transform:scaleX(1.0700);">Open in iOS Simulator</span>
<span class="t" style="left:2296.00px;top:118.00px;font-size:19.6px;line-height:19.6px;color:#262626;letter-spacing:0.043px;transform:scaleX(1.0700);">Open in Xcode</span>
<span class="t" style="left:2454.10px;top:118.00px;font-size:19.6px;line-height:19.6px;color:#262626;letter-spacing:0.246px;transform:scaleX(1.0700);">Android Studio</span>
<span class="t" style="left:2741.90px;top:118.00px;font-size:19.6px;line-height:19.6px;color:#262626;letter-spacing:0.110px;transform:scaleX(1.0700);">Export</span>
<svg class="b" style="left:811px;top:69px" width="46" height="35" viewBox="811 69 46 35"><rect x="812.6" y="70.5" width="42.4" height="30.6" fill="#fff" stroke="#8a8a8a" stroke-width="1"/><path d="M812.4 101.9 L855.2 101.9" stroke="#9a9a9a" stroke-width="1" opacity="0.7"/>
<path d="M838.2 77 L849.9 95.7 L824.9 95.7 Z" fill="#7ec4b9" stroke="#5a8f8a" stroke-width="0.8" stroke-linejoin="round"/><circle cx="827.4" cy="83.8" r="9.3" fill="#eef98e" stroke="#8a9a62" stroke-width="0.8"/></svg>
<svg class="b" style="left:1000px;top:72px" width="48" height="28" viewBox="1000 72 48 28"><defs><radialGradient id="mv1" cx="0.35" cy="0.45" r="0.6"><stop offset="0" stop-color="#cfc6bc"/><stop offset="0.6" stop-color="#8f857a"/><stop offset="1" stop-color="#4a423c"/></radialGradient></defs>
<rect x="1000.9" y="72.7" width="46.2" height="26.4" fill="#080808"/><rect x="1007.7" y="73.8" width="32.3" height="23.9" fill="url(#mv1)"/>
<path d="M1010 97.7 L1011 86 Q1013 78 1017 77 Q1020 77 1021 82 L1024 97.7 Z" fill="#c9c1b8" opacity="0.9"/><circle cx="1016.4" cy="78.6" r="2.3" fill="#d8cfc4"/>
<path d="M1021 84 Q1024 78 1027 80 L1028 92 L1022 95 Z" fill="#b9b2aa" opacity="0.85"/><circle cx="1024.6" cy="77.4" r="2" fill="#cbbfb2"/>
<path d="M1027 97.7 Q1027 88 1031 85 Q1036 83 1038 88 L1040 97.7 Z" fill="#cc8a72"/><circle cx="1033.6" cy="81.6" r="2.6" fill="#d9a88e"/><path d="M1024 86 L1031 87.5 L1031 89.5 L1024 88 Z" fill="#d39a80"/>
<rect x="1007.7" y="73.8" width="6" height="23.9" fill="#3c3632" opacity="0.5"/><rect x="1007.7" y="93.5" width="32.3" height="4.2" fill="#5a4f45" opacity="0.6"/>
<g fill="#efefef"><rect x="1002.1" y="74.30" width="4.4" height="2.3" rx="0.8"/><rect x="1041.5" y="74.30" width="4.4" height="2.3" rx="0.8"/><rect x="1002.1" y="79.35" width="4.4" height="2.3" rx="0.8"/><rect x="1041.5" y="79.35" width="4.4" height="2.3" rx="0.8"/><rect x="1002.1" y="84.40" width="4.4" height="2.3" rx="0.8"/><rect x="1041.5" y="84.40" width="4.4" height="2.3" rx="0.8"/><rect x="1002.1" y="89.45" width="4.4" height="2.3" rx="0.8"/><rect x="1041.5" y="89.45" width="4.4" height="2.3" rx="0.8"/><rect x="1002.1" y="94.50" width="4.4" height="2.3" rx="0.8"/><rect x="1041.5" y="94.50" width="4.4" height="2.3" rx="0.8"/></g></svg>
<svg class="b" style="left:1152px;top:66px" width="40" height="40" viewBox="1152 66 40 40"><defs><linearGradient id="gb" x1="0" y1="0" x2="0" y2="1"><stop offset="0" stop-color="#50b4da"/><stop offset="1" stop-color="#4a7fb6"/></linearGradient>
<linearGradient id="gb2" x1="0" y1="0" x2="0" y2="1"><stop offset="0" stop-color="#4faad2"/><stop offset="1" stop-color="#4a85ba"/></linearGradient></defs>
<circle cx="1172.1" cy="85.9" r="18.1" fill="url(#gb)"/><circle cx="1172.1" cy="85.9" r="14.4" fill="url(#gb2)" stroke="#d8edf7" stroke-width="1.1"/>
<g fill="#e4eff6"><circle cx="1167.8" cy="81.9" r="2.9"/><circle cx="1176.3" cy="81.9" r="2.9"/><circle cx="1167.8" cy="90.1" r="2.9"/><circle cx="1176.3" cy="90.1" r="2.9"/></g></svg>
<svg class="b" style="left:1294px;top:60px" width="36" height="50" viewBox="1294 60 36 50"><path d="M1311.9 91 L1311.9 107" stroke="#626262" stroke-width="2"/>
<path d="M1311.9 65.1 L1325.7 78.3 L1311.9 91.2 L1298.4 78.3 Z" fill="#e6c340" stroke="#45443a" stroke-width="1.1" stroke-linejoin="miter"/>
<path d="M1322.6 78.3 L1311.9 88.4 L1311.9 90 L1324.4 78.3 Z" fill="#f8f04c"/><path d="M1311.9 66.6 L1324.4 78.3 L1322.6 78.3 L1311.9 68.4 Z" fill="#f6e84a"/></svg>
<svg class="b" style="left:2146px;top:62px" width="52" height="48" viewBox="2146 62 52 48"><defs><linearGradient id="bp1" x1="0" y1="0" x2="0" y2="1"><stop offset="0" stop-color="#72bbf6"/><stop offset="1" stop-color="#3488e8"/></linearGradient></defs><path d="M2149.00 77.00 L2188.00 68.50 L2193.00 99.00 L2153.80 105.90 Z" fill="url(#bp1)"/><path d="M2151.29 78.60 L2186.40 71.05 L2190.69 97.22 L2155.42 103.53 Z" fill="none" stroke="#d6eafc" stroke-width="0.8" opacity="0.9"/><g stroke="#dcedfc" stroke-width="1.1" fill="none" opacity="0.9"><path d="M2163.31 100.00 L2169.19 76.91 L2172.31 76.25 L2166.54 100.02"/><path d="M2170.06 77.34 L2183.67 91.33"/><path d="M2173.19 76.68 L2185.82 89.67"/><path d="M2159.46 91.37 L2181.80 84.84"/><path d="M2159.80 93.42 L2182.93 86.80"/><path d="M2159.46 91.37 L2159.80 93.42"/></g><path d="M2155.57 102.01 L2157.53 101.65 L2157.87 103.69 L2155.91 104.04 Z" fill="#f2f8fe"/><path d="M2183 78.6 L2191.6 80.9 Q2193.8 81.6 2193.3 83.8 L2188.6 103.4 Q2188 105.6 2185.8 105 L2177.2 102.7 Q2175 102 2175.5 99.8 L2180.2 80.2 Q2180.8 78 2183 78.6 Z" fill="#121316"/><path d="M2182.2 82.2 L2191 84.5 L2187 101 L2178.2 98.7 Z" fill="#26272b"/></svg>
<svg class="b" style="left:2340px;top:60px" width="54" height="50" viewBox="2340 60 54 50"><defs><linearGradient id="bp2" x1="0" y1="0" x2="0" y2="1"><stop offset="0" stop-color="#72bbf6"/><stop offset="1" stop-color="#3488e8"/></linearGradient></defs><path d="M2343.80 77.00 L2382.30 68.70 L2387.20 98.90 L2348.30 105.30 Z" fill="url(#bp2)"/><path d="M2346.04 78.57 L2380.72 71.22 L2384.91 97.11 L2349.93 102.99 Z" fill="none" stroke="#d6eafc" stroke-width="0.8" opacity="0.9"/><g stroke="#dcedfc" stroke-width="1.1" fill="none" opacity="0.9"><path d="M2357.77 99.60 L2363.71 76.94 L2366.79 76.30 L2360.97 99.65"/><path d="M2364.57 77.37 L2377.97 91.23"/><path d="M2367.66 76.73 L2380.11 89.62"/><path d="M2354.02 91.11 L2376.14 84.82"/><path d="M2354.34 93.12 L2377.25 86.76"/><path d="M2354.02 91.11 L2354.34 93.12"/></g><path d="M2350.09 101.51 L2352.03 101.17 L2352.35 103.17 L2350.41 103.50 Z" fill="#f2f8fe"/><path d="M2377.6 72.5 L2382.2 73.8 L2379.2 84 L2374.6 82.8 Z" fill="#c4c8cc"/><path d="M2374.8 82.2 L2379.4 83.4 L2372.4 104.2 Q2371.6 106 2369.6 105.4 Q2367.6 104.8 2368 102.8 Z" fill="#26282c"/><path d="M2367.6 67.4 Q2373.5 62.6 2380.4 64.6 L2386.6 66.8 L2389.4 67 L2389.6 71.2 L2386.2 71.6 L2384.6 74.6 L2376.4 72.4 Q2372.6 69.6 2368.4 68.8 Z" fill="#cfd3d7" stroke="#8f9499" stroke-width="0.7"/></svg>
<svg class="b" style="left:2500px;top:60px" width="48" height="50" viewBox="2500 60 48 50"><circle cx="2523.9" cy="83.7" r="20.2" fill="#96c564"/><path d="M2503.7 83.7 A20.2 20.2 0 0 1 2544.1 83.7 Z" fill="#89b959"/>
<path d="M2518.4 84 L2522.6 87.8 L2510.2 108 L2507.4 107.4 Z" fill="#f3f3f3"/><path d="M2529.4 84 L2525.2 87.8 L2537.6 108 L2540.4 107.4 Z" fill="#f3f3f3"/>
<path d="M2514.2 92.4 Q2523.9 102.4 2533.6 92.4" fill="none" stroke="#f3f3f3" stroke-width="3"/>
<path d="M2521.6 72.8 L2526.2 72.8 L2526.2 75.4 L2529.4 78 L2529.4 83.4 L2523.9 88.2 L2518.4 83.4 L2518.4 78 L2521.6 75.4 Z" fill="#616466"/><circle cx="2523.9" cy="80.8" r="2.6" fill="#8fbf5e"/></svg>
<svg class="b" style="left:2754px;top:68px" width="38" height="36" viewBox="2754 68 38 36"><defs><linearGradient id="ge" x1="0" y1="0" x2="1" y2="0"><stop offset="0" stop-color="#e2d4aa"/><stop offset="1" stop-color="#9fb0b8"/></linearGradient></defs>
<path d="M2757.2 77.1 L2774 77.1 L2774 71.8 L2787.4 85.4 L2774 99 L2774 93.9 L2757.2 93.9 Z" fill="url(#ge)" stroke="#4c4e50" stroke-width="1.2" stroke-linejoin="miter"/></svg>
</div>
</body></html>
